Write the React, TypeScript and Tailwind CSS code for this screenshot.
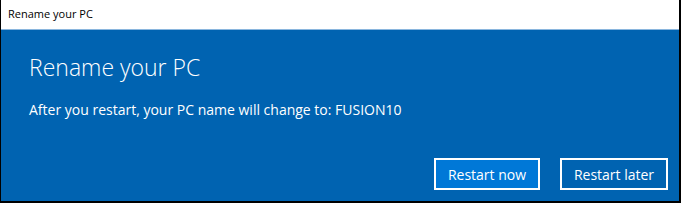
const App = () => {
  return (
    <div
      className="w-[681px] h-[203px] flex flex-col border-l border-r-2 border-b-2 border-black bg-[#0063b1] overflow-hidden"
      style={{ fontFamily: '"Open Sans", "Noto Sans", sans-serif' }}
    >
      <div className="h-[29px] bg-white flex items-center pl-[7px] text-[11px] text-black">
        Rename your PC
      </div>
      <div className="h-px bg-[#8ab6de]" />
      <div className="flex-1 flex flex-col pl-[28px] pr-[11px] text-white">
        <h1 className="mt-[22px] text-[23px] font-light leading-[30px]">Rename your PC</h1>
        <p className="mt-[18px] text-[14px] leading-[20px]">
          After you restart, your PC name will change to: FUSION10
        </p>
        <div className="mt-auto mb-[11px] flex justify-end gap-[20px]">
          <button className="w-[106px] h-[32px] border-2 border-white bg-[#0078d7] text-[14px] text-white">
            Restart now
          </button>
          <button className="w-[108px] h-[32px] border-2 border-white text-[14px] text-white">
            Restart later
          </button>
        </div>
      </div>
    </div>
  );
};

export default App;
